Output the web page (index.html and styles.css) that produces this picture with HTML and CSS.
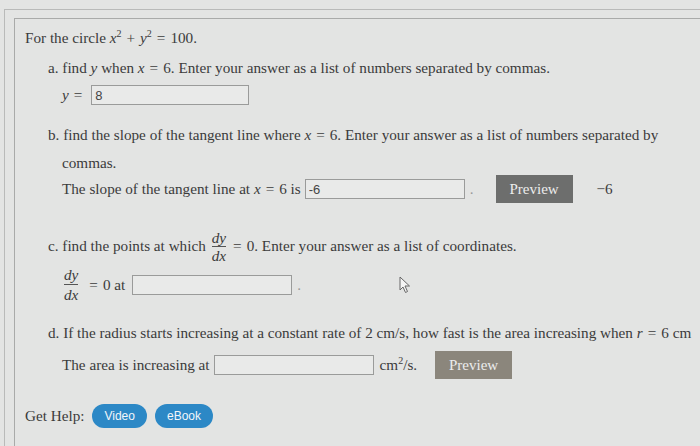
FILE: index.html
```html
<!DOCTYPE html>
<html lang="en">
<head>
    <meta charset="UTF-8">
    <meta name="viewport" content="width=device-width, initial-scale=1.0">
    <title>Circle problem</title>
    <link rel="stylesheet" href="styles.css">
</head>
<body>
    <div class="frame">
        <div class="problem">
            <p class="intro">For the circle <i>x</i><sup>2</sup><span class="op">+</span><i>y</i><sup>2</sup><span class="op">=</span>100.</p>

            <div class="part part-a">
                <p>a. find <i>y</i> when <i>x</i><span class="op">=</span>6. Enter your answer as a list of numbers separated by commas.</p>
                <div class="answer">
                    <span><i>y</i><span class="op">=</span></span>
                    <input class="ans-box" type="text" value="8">
                </div>
            </div>

            <div class="part part-b">
                <p>b. find the slope of the tangent line where <i>x</i><span class="op">=</span>6. Enter your answer as a list of numbers separated by</p>
                <p class="wrap">commas.</p>
                <div class="answer">
                    <span>The slope of the tangent line at <i>x</i><span class="op">=</span>6 is</span>
                    <input class="ans-box" type="text" value="-6">
                    <span class="dot">.</span>
                    <button class="preview-btn">Preview</button>
                    <span class="preview-out">&minus;6</span>
                </div>
            </div>

            <div class="part part-c">
                <p class="frac-line">c. find the points at which <span class="frac"><i>dy</i><i class="den">dx</i></span><span class="op">=</span>0. Enter your answer as a list of coordinates.</p>
                <div class="answer">
                    <span class="frac"><i>dy</i><i class="den">dx</i></span>
                    <span><span class="op">=</span>0 at</span>
                    <input class="ans-box" type="text" value="">
                    <span class="dot">.</span>
                    <svg class="cursor" width="12" height="18" viewBox="0 0 12 18">
                        <path d="M1 1 L1 14 L4 11 L6.5 16.5 L8.5 15.5 L6 10 L10.5 10 Z" fill="#f4f4f4" stroke="#666" stroke-width="1" stroke-linejoin="round"/>
                    </svg>
                </div>
            </div>

            <div class="part part-d">
                <p>d. If the radius starts increasing at a constant rate of 2 cm/s, how fast is the area increasing when <i>r</i><span class="op">=</span>6 cm</p>
                <div class="answer">
                    <span>The area is increasing at</span>
                    <input class="ans-box" type="text" value="">
                    <span class="unit">cm<sup>2</sup>/s.</span>
                    <button class="preview-btn warm">Preview</button>
                </div>
            </div>

            <div class="help">
                <span>Get Help:</span>
                <button class="help-btn">Video</button>
                <button class="help-btn">eBook</button>
            </div>
        </div>
    </div>
</body>
</html>
```

FILE: styles.css
```css
* { box-sizing: border-box; margin: 0; padding: 0; }
html, body { height: 100%; overflow: hidden; }
body {
    font-family: 'Liberation Serif', 'Times New Roman', serif;
    font-size: 15.2px;
    color: #3b3b3b;
    background-color: #e3e4e3;
}
.frame {
    margin: 9px 0 0 4px;
    border-left: 1px solid #b9bab9;
    border-top: 1px solid #b9bab9;
    height: 100%;
    padding: 8px 0 0 9px;
}
.problem {
    border-left: 1px solid #a9aaa9;
    border-top: 1px solid #a9aaa9;
    height: 100%;
    padding: 9px 0 0 10px;
    white-space: nowrap;
}
i { font-style: italic; }
sup { font-size: 10px; vertical-align: 6px; line-height: 0; }
.op { margin: 0 5px; }
.intro { line-height: 20px; }
.part { padding-left: 23px; }
.part p { line-height: 20px; }
.part-a { margin-top: 10px; }
.part-b { margin-top: 20px; }
.part-c { margin-top: 24px; }
.part-d { margin-top: 19px; }
.wrap { margin-top: 8px; padding-left: 14px; }
.answer {
    display: flex;
    align-items: center;
    gap: 4px;
    padding-left: 14px;
}
.part-a .answer { margin-top: 7px; }
.part-b .answer { margin-top: 2px; }
.part-c .answer { margin-top: 0; }
.part-d .answer { margin-top: 8px; }
.ans-box {
    width: 160px;
    height: 20px;
    border: 1px solid #9a9b9a;
    background-color: #e9eae9;
    font-family: 'Liberation Sans', Arial, sans-serif;
    font-size: 13px;
    color: #444;
    padding: 0 3px;
    outline: none;
}
.part-a .ans-box { width: 158px; }
.part-c .ans-box { margin-left: 3px; }
.dot { color: #999; margin: 0 8px 0 1px; }
.preview-btn {
    background-color: #6d6e6d;
    color: #ececec;
    border: none;
    font-family: 'Liberation Serif', 'Times New Roman', serif;
    font-size: 15px;
    width: 77px;
    height: 28px;
    margin: 0 10px;
}
.preview-btn.warm { background-color: #8b867c; margin-left: 14px; }
.preview-out { margin-left: 10px; }
.frac {
    display: inline-flex;
    flex-direction: column;
    align-items: center;
    vertical-align: middle;
    line-height: 17px;
    padding: 0 2px;
}
.frac .den { border-top: 1px solid #555; }
.frac-line { height: 38px; display: flex; align-items: center; gap: 4px; }
.frac-line .op { margin: 0 1px; }
.part-c .answer .frac { line-height: 19px; }
.cursor { margin-left: 86px; }
.unit { margin-left: 2px; }
.help {
    margin-top: 25px;
    display: flex;
    align-items: center;
    gap: 8px;
}
.help-btn {
    background-color: #2c88c6;
    color: #f2f6fa;
    border: none;
    border-radius: 12px;
    font-family: 'Liberation Sans', Arial, sans-serif;
    font-size: 12px;
    height: 24px;
    padding: 0 12px;
}
```
